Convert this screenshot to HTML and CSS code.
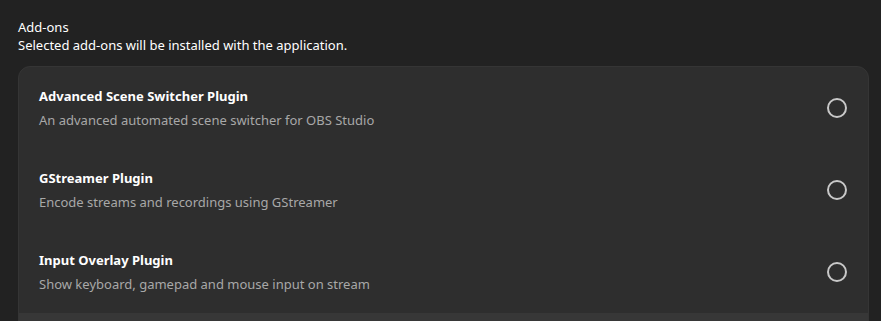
FILE: index.html
```html
<!DOCTYPE html>
<html>
  <head>
    <meta charset="utf-8" />
    <title>Add-ons</title>
    <link rel="stylesheet" href="styles.css">
  </head>

  <body>
    <div class="addons">
      <div class="addons-head">
        <div class="addons-title">Add-ons</div>
        <div class="addons-desc">Selected add-ons will be installed with the application.</div>
      </div>

      <div class="addons-list">
        <div class="addon-row">
          <div class="addon-text">
            <div class="addon-name">Advanced Scene Switcher Plugin</div>
            <div class="addon-sub">An advanced automated scene switcher for OBS Studio</div>
          </div>
          <span class="check"></span>
        </div>
        <div class="addon-row">
          <div class="addon-text">
            <div class="addon-name">GStreamer Plugin</div>
            <div class="addon-sub">Encode streams and recordings using GStreamer</div>
          </div>
          <span class="check"></span>
        </div>
        <div class="addon-row">
          <div class="addon-text">
            <div class="addon-name">Input Overlay Plugin</div>
            <div class="addon-sub">Show keyboard, gamepad and mouse input on stream</div>
          </div>
          <span class="check"></span>
        </div>
        <!-- next row is scrolled out of view, only its hover background shows -->
        <div class="addon-row hover"></div>
      </div>
    </div>
  </body>
</html>
```

FILE: styles.css
```css
html,
body {
  margin: 0;
  height: 100%;
  overflow: hidden;
}

body {
  background-color: #222222;
  color: #ffffff;
  font-family: "Noto Sans", sans-serif;
  font-size: 13px;
}

.addons {
  padding: 18px 12px 0 18px;
}

.addons-head {
  line-height: 18px;
  margin-bottom: 12px;
}

.addons-list {
  background-color: #2e2e2e;
  border: 1px solid #353535;
  border-radius: 12px;
  overflow: hidden;
}

.addon-row {
  display: flex;
  align-items: center;
  height: 82px;
  padding: 0 21px 0 20px;
}

.addon-row.hover {
  background-color: #373737;
}

.addon-text {
  flex: 1;
}

.addon-name {
  font-weight: bold;
  line-height: 18px;
  margin-bottom: 6px;
}

.addon-sub {
  color: #a8a8a8;
  line-height: 18px;
}

.check {
  width: 16px;
  height: 16px;
  border: 2px solid #c8c8c8;
  border-radius: 50%;
}
```
